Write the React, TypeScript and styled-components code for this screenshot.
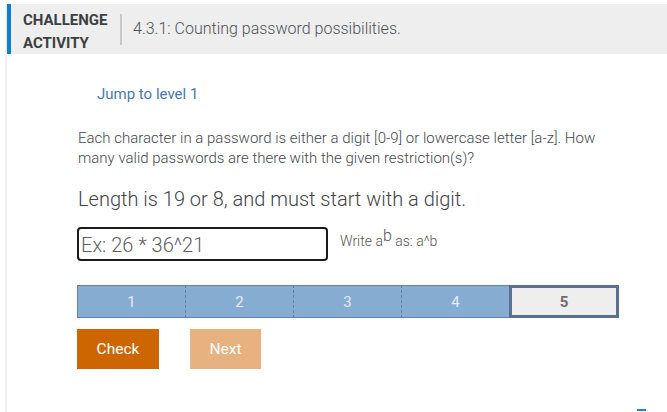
import React from "react";
import styled, { createGlobalStyle } from "styled-components";

const Global = createGlobalStyle`
  html, body { margin: 0; padding: 0; background: #fff; }
  body { font-family: Roboto, "Liberation Sans", Arial, sans-serif; }
`;

const Page = styled.div`
  padding: 4px 0 0 5px;
  width: 667px;
  height: 412px;
  box-sizing: border-box;
  overflow: hidden;
  position: relative;
`;

const Card = styled.div`
  border-left: 2px solid #f1f1f1;
  height: 420px;
`;

const Header = styled.div`
  display: flex;
  align-items: center;
  height: 50px;
  background: #eeeeee;
  border-left: 4px solid #0e7dcb;
  box-sizing: border-box;
`;

const Label = styled.div`
  font-size: 15px;
  font-weight: 700;
  line-height: 23px;
  color: #3b3f42;
  padding: 6px 0 0 12px;
  width: 107px;
  box-sizing: border-box;
`;

const Divider = styled.div`
  width: 2px;
  height: 31px;
  background: #c8c8c8;
  margin: 0 11px 0 2px;
`;

const Title = styled.div`
  font-size: 16px;
  font-weight: 300;
  color: #4d5156;
  padding-bottom: 2px;
`;

const Body = styled.div`
  padding: 30px 0 0 70px;
  display: flex;
  flex-direction: column;
`;

const Jump = styled.a`
  font-size: 15px;
  color: #4a78a8;
  margin-left: 20px;
  line-height: 20px;
`;

const Para = styled.p`
  margin: 24px 0 0 1px;
  font-size: 15px;
  font-weight: 300;
  line-height: 20px;
  color: #44484c;
  width: 540px;
`;

const Question = styled.div`
  font-size: 20px;
  font-weight: 300;
  color: #3f4347;
  margin: 16px 0 0 1px;
  line-height: 30px;
`;

const InputRow = styled.div`
  display: flex;
  align-items: flex-start;
  margin-top: 13px;
  gap: 12px;
`;

const Input = styled.input`
  width: 251px;
  height: 34px;
  box-sizing: border-box;
  border: 2px solid #1a1a1a;
  border-radius: 4px;
  font-family: Roboto, "Liberation Sans", Arial, sans-serif;
  font-size: 20px;
  font-weight: 300;
  padding: 2px 2px 0 2px;
  outline: none;
  &::placeholder { color: #5f5f5f; }
`;

const Hint = styled.div`
  font-size: 14px;
  font-weight: 300;
  color: #555;
  margin-top: 4px;
  sup { font-size: 16px; vertical-align: 0; position: relative; top: -5px; }
`;

const Progress = styled.div`
  display: flex;
  width: 542px;
  height: 33px;
  margin-top: 24px;
`;

const Seg = styled.div<{ $active?: boolean; $first?: boolean }>`
  display: flex;
  align-items: center;
  justify-content: center;
  box-sizing: border-box;
  font-size: 15px;
  background: ${(p) => (p.$active ? "#eeeeee" : "#87acd2")};
  color: ${(p) => (p.$active ? "#6a6a6a" : "#e3ecf5")};
  font-weight: ${(p) => (p.$active ? 700 : 400)};
  border: ${(p) => (p.$active ? "3px solid #5a7092" : "1px solid #5e82aa")};
  border-left: ${(p) =>
    p.$active ? "3px solid #5a7092" : p.$first ? "1px solid #5e82aa" : "1px dashed #5e82aa"};
  ${(p) => (!p.$active ? "border-right: none;" : "")}
  flex: 0 0 ${(p) => (p.$active ? "110px" : "108px")};
`;

const Buttons = styled.div`
  display: flex;
  gap: 31px;
  margin-top: 11px;
`;

const Btn = styled.button<{ $light?: boolean }>`
  height: 40px;
  width: ${(p) => (p.$light ? "71px" : "82px")};
  border: none;
  background: ${(p) => (p.$light ? "#e7b280" : "#cd6600")};
  color: #fff;
  font-family: Roboto, "Liberation Sans", Arial, sans-serif;
  font-size: 15.5px;
  padding: 0;
`;

const Corner = styled.div`
  position: absolute;
  left: 637px;
  bottom: 1px;
  width: 9px;
  height: 2px;
  background: #1f87d6;
`;

export default function App() {
  return (
    <>
      <Global />
      <Page>
        <Card>
          <Header>
            <Label>
              CHALLENGE
              <br />
              ACTIVITY
            </Label>
            <Divider />
            <Title>4.3.1: Counting password possibilities.</Title>
          </Header>
          <Body>
            <Jump>Jump to level 1</Jump>
            <Para>
              Each character in a password is either a digit [0-9] or lowercase letter [a-z]. How
              many valid passwords are there with the given restriction(s)?
            </Para>
            <Question>Length is 19 or 8, and must start with a digit.</Question>
            <InputRow>
              <Input placeholder="Ex: 26 * 36^21" />
              <Hint>
                Write a<sup>b</sup> as: a^b
              </Hint>
            </InputRow>
            <Progress>
              <Seg $first>1</Seg>
              <Seg>2</Seg>
              <Seg>3</Seg>
              <Seg>4</Seg>
              <Seg $active>5</Seg>
            </Progress>
            <Buttons>
              <Btn>Check</Btn>
              <Btn $light>Next</Btn>
            </Buttons>
          </Body>
        </Card>
        <Corner />
      </Page>
    </>
  );
}
